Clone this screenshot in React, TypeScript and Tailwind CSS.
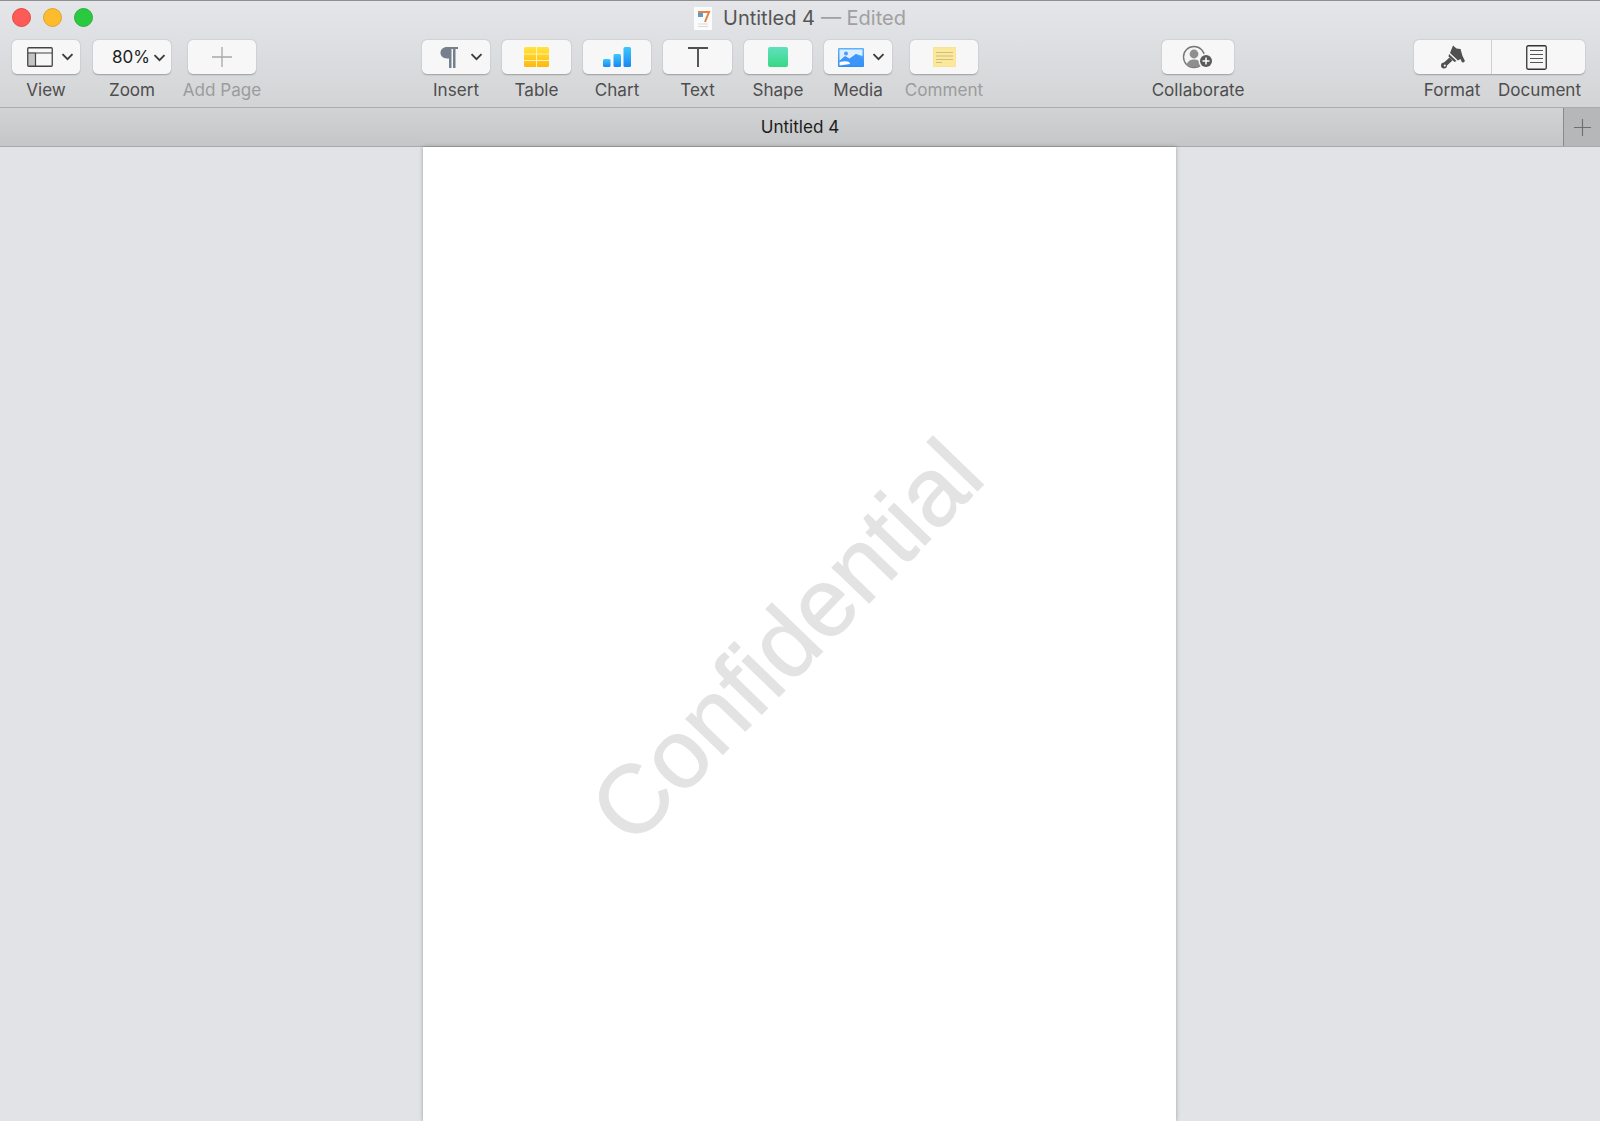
import React from 'react';

const Chevron = () => (
  <svg width="13" height="8" viewBox="0 0 13 8" fill="none" stroke="#3c3c3c" strokeWidth="1.9">
    <path d="M1.5 1.2 L6.5 6.2 L11.5 1.2" />
  </svg>
);

const ViewIcon = () => (
  <svg width="26" height="20" viewBox="0 0 26 20" fill="none">
    <rect x="1" y="5" width="8" height="14" fill="#c4c4c4" />
    <rect x="0.75" y="0.75" width="24.5" height="18.5" rx="1" stroke="#444" strokeWidth="1.3" />
    <path d="M1 6 H25 M8.5 6 V19" stroke="#444" strokeWidth="1.2" />
  </svg>
);

const PlusIcon = ({ color, size }: { color: string; size: number }) => (
  <svg width={size} height={size} viewBox="0 0 20 20" stroke={color} strokeWidth="1.3">
    <path d="M10 0 V20 M0 10 H20" />
  </svg>
);

const PilcrowIcon = () => (
  <svg width="18" height="21" viewBox="0 0 18 21" fill="#75808c">
    <path d="M7 0 H18 V2 H15.5 V21 H13 V2 H11.5 V21 H9 V11.5 H7 C3 11.5 0.5 9 0.5 5.8 C0.5 2.5 3 0 7 0 Z" />
  </svg>
);

const TableIcon = () => (
  <svg width="25" height="20" viewBox="0 0 25 20">
    <defs>
      <linearGradient id="tbl" x1="0" y1="0" x2="0" y2="1">
        <stop offset="0" stopColor="#ffe53d" />
        <stop offset="1" stopColor="#ffb80f" />
      </linearGradient>
    </defs>
    <rect width="25" height="20" rx="1.5" fill="url(#tbl)" />
    <path d="M0 7 H25 M0 13.5 H25 M12.5 0 V20" stroke="#fff3b8" strokeWidth="1" />
  </svg>
);

const ChartIcon = () => (
  <svg width="28" height="20" viewBox="0 0 28 20">
    <defs>
      <linearGradient id="bar" x1="0" y1="0" x2="0" y2="1">
        <stop offset="0" stopColor="#3cc8fb" />
        <stop offset="1" stopColor="#1a85f5" />
      </linearGradient>
    </defs>
    <rect x="0" y="12" width="7.5" height="8" rx="1.5" fill="url(#bar)" />
    <rect x="10.5" y="7" width="7.5" height="13" rx="1.5" fill="url(#bar)" />
    <rect x="20.5" y="0" width="7.5" height="20" rx="1.5" fill="url(#bar)" />
  </svg>
);

const TextIcon = () => (
  <svg width="20" height="20" viewBox="0 0 20 20" stroke="#505050" strokeWidth="1.9" fill="none">
    <path d="M0 1 H20 M10 1 V20" />
  </svg>
);

const MediaIcon = () => (
  <svg width="26" height="19" viewBox="0 0 26 19">
    <defs>
      <linearGradient id="sky" x1="0" y1="0" x2="0" y2="1">
        <stop offset="0" stopColor="#5fb3fd" />
        <stop offset="1" stopColor="#2f8bfa" />
      </linearGradient>
    </defs>
    <rect width="26" height="19" rx="1" fill="url(#sky)" />
    <path d="M1.5 1.5 H24.5 V8 L18 6 L11.5 10.5 L7 8 L1.5 13 Z" fill="#dcefff" />
    <circle cx="8" cy="5.5" r="2" fill="#4a9dfb" />
    <path d="M1.5 13 L7 8.5 L11.5 11.5 L18 6 L24.5 11 L24.5 17.5 L1.5 17.5 Z" fill="#3d94fb" />
    <path d="M1.5 17.5 L1.5 14 Q12 12 12 16 Z" fill="#fff" />
  </svg>
);

const CommentIcon = () => (
  <svg width="23" height="20" viewBox="0 0 23 20">
    <rect width="23" height="20" rx="1" fill="#fbe89a" stroke="#f2d98a" strokeWidth="0.5" />
    <path d="M3 5.5 H20 M3 9 H20 M3 12.5 H20 M3 15.5 H9" stroke="#cdbd84" strokeWidth="1" />
  </svg>
);

const CollaborateIcon = () => (
  <svg width="32" height="24" viewBox="0 0 32 24">
    <circle cx="12" cy="12" r="10.5" fill="#f5f5f5" stroke="#777" strokeWidth="1.4" />
    <circle cx="12" cy="9" r="4.4" fill="#8e8e8e" />
    <path d="M4.5 20 C6 15.5 9 14.5 12 14.5 C15 14.5 18 15.5 19.5 20 C15 23 9 23 4.5 20 Z" fill="#8e8e8e" />
    <circle cx="24" cy="16" r="7.5" fill="#f5f5f5" />
    <circle cx="24" cy="16" r="6" fill="#5a5a5a" />
    <path d="M24 12.5 V19.5 M20.5 16 H27.5" stroke="#fff" strokeWidth="1.5" />
  </svg>
);

const FormatIcon = () => (
  <svg width="24" height="24" viewBox="0 0 24 24" fill="#505050">
    <path d="M12 0.5 L15.5 3.5 L19.5 4 L21.5 11 L23.5 15 A1.6 1.6 0 1 1 20.5 16.5 L19.5 14 L17 15.5 L9 8 Z" />
    <path d="M8 9 L15.5 16 L13.5 17 L7.5 11.5 Z" />
    <path fillRule="evenodd" d="M8.5 12.5 L11.5 15.5 L6 20.5 A3 3 0 1 1 3 17.5 Z M3.8 19.4 A1 1 0 1 0 3.81 19.4 Z" />
  </svg>
);

const DocumentIcon = () => (
  <svg width="21" height="25" viewBox="0 0 21 25" fill="none" stroke="#333">
    <rect x="0.75" y="0.75" width="19.5" height="23.5" rx="1.5" strokeWidth="1.3" />
    <path d="M4 5.5 H17 M4 9.5 H17 M4 13.5 H17 M4 17.5 H17" strokeWidth="1.2" stroke="#555" />
  </svg>
);

const btn = 'h-[34px] flex items-center justify-center rounded-[5px] bg-[#f7f7f7] shadow-[0_0.5px_1.5px_rgba(0,0,0,0.28)]';

type ToolProps = {
  label: string;
  width: string;
  dim?: boolean;
  children: React.ReactNode;
};

const Tool = ({ label, width, dim, children }: ToolProps) => (
  <div className={`flex flex-col items-center ${width}`}>
    <div className={`${btn} w-full`}>{children}</div>
    <span className={`mt-[5px] text-[17.1px] leading-[22px] whitespace-nowrap ${dim ? 'text-[#9c9c9c]' : 'text-[#4d4d4d]'}`}>{label}</span>
  </div>
);

const App: React.FC = () => {
  return (
    <div className="relative flex h-[1121px] w-[1600px] flex-col overflow-hidden bg-[#e1e3e7] font-['Inter','Liberation_Sans',sans-serif]">
      <div className="relative h-[108px] shrink-0 border-t border-t-[#8f8f8f] border-b border-b-[#acacac] bg-gradient-to-b from-[#e5e6e9] to-[#d3d4d6]">
        <div className="flex h-[32px] items-center pl-[12px]">
          <div className="flex gap-[12px]">
            <span className="h-[19px] w-[19px] rounded-full bg-[#fc5b57] border border-[#e5483f]" />
            <span className="h-[19px] w-[19px] rounded-full bg-[#fdbb2e] border border-[#e0a52a]" />
            <span className="h-[19px] w-[19px] rounded-full bg-[#2ac940] border border-[#25b23a]" />
          </div>
          <div className="ml-[601px] mt-[2px] flex items-center">
            <svg width="18" height="23" viewBox="0 0 18 23">
              <rect width="18" height="23" fill="#fbfbfb" />
              <rect x="4" y="5" width="5" height="5" fill="#5b9bd5" />
              <path d="M4 5 H15 L11 15" fill="none" stroke="#e8813a" strokeWidth="2" />
              <path d="M4 17 H14 M4 19.5 H14" stroke="#d9d9d9" strokeWidth="1" />
            </svg>
            <span className="ml-[11px] text-[20px] leading-[26px] whitespace-nowrap text-[#555]">Untitled 4</span>
            <span className="ml-[6px] text-[20px] leading-[26px] whitespace-nowrap text-[#a0a0a0]">— Edited</span>
          </div>
        </div>
        <div className="mt-[7px] flex items-start pl-[12px]">
          <Tool label="View" width="w-[68px]">
            <span className="ml-[8px] flex items-center gap-[8px]"><ViewIcon /><Chevron /></span>
          </Tool>
          <div className="ml-[13px]">
            <Tool label="Zoom" width="w-[78px]">
              <span className="ml-[14px] mt-[2px] flex items-center gap-[3px] text-[17px] text-[#1e1e1e]">80%<Chevron /></span>
            </Tool>
          </div>
          <div className="ml-[17px]">
            <Tool label="Add Page" width="w-[68px]" dim>
              <PlusIcon color="#a8a8a8" size={20} />
            </Tool>
          </div>
          <div className="ml-[166px] flex gap-[12px]">
            <Tool label="Insert" width="w-[68px]">
              <span className="ml-[11px] flex items-center gap-[12px]"><PilcrowIcon /><Chevron /></span>
            </Tool>
            <Tool label="Table" width="w-[69px]"><TableIcon /></Tool>
            <Tool label="Chart" width="w-[68px]"><ChartIcon /></Tool>
            <Tool label="Text" width="w-[69px]"><TextIcon /></Tool>
            <Tool label="Shape" width="w-[68px]">
              <span className="h-[20px] w-[20px] rounded-[2px] bg-gradient-to-b from-[#5fe0bd] to-[#35d884]" />
            </Tool>
            <Tool label="Media" width="w-[68px]">
              <span className="ml-[7px] flex items-center gap-[8px]"><MediaIcon /><Chevron /></span>
            </Tool>
            <div className="ml-[6px]">
              <Tool label="Comment" width="w-[68px]" dim><CommentIcon /></Tool>
            </div>
          </div>
          <div className="ml-[184px]">
            <Tool label="Collaborate" width="w-[72px]"><CollaborateIcon /></Tool>
          </div>
          <div className="ml-[180px] flex">
            <div className="flex w-[78px] flex-col items-center">
              <div className={`${btn} w-full rounded-r-none border-r border-r-[#dcdcdc]`}><FormatIcon /></div>
              <span className="mt-[5px] mr-[2px] text-[17.1px] leading-[22px] text-[#4d4d4d]">Format</span>
            </div>
            <div className="flex w-[93px] flex-col items-center">
              <div className={`${btn} w-full rounded-l-none pr-[4px]`}><DocumentIcon /></div>
              <span className="mt-[5px] ml-[2px] text-[17.1px] leading-[22px] whitespace-nowrap text-[#4d4d4d]">Document</span>
            </div>
          </div>
        </div>
      </div>

      <div className="flex h-[39px] shrink-0 border-b border-b-[#a9a9a9] bg-gradient-to-b from-[#d2d3d5] to-[#c5c6c8]">
        <div className="flex flex-1 items-center justify-center pl-[37px] text-[17.1px] text-[#1c1c1c]">Untitled 4</div>
        <div className="flex w-[37px] items-center justify-center border-l-[1.5px] border-l-[#8a8a8a] bg-[#b6b7b9]">
          <PlusIcon color="#6e6e6e" size={17} />
        </div>
      </div>

      <div className="flex min-h-0 flex-1 justify-center">
        <div className="relative ml-[-1px] h-full w-[753px] bg-white shadow-[0_0_4px_rgba(0,0,0,0.3)]">
          <span className="absolute left-[363px] top-[494px] -translate-x-1/2 -translate-y-1/2 -rotate-[46deg] font-['Liberation_Sans',sans-serif] text-[97px] leading-none whitespace-nowrap text-[#e3e3e3] [-webkit-text-stroke:1px_#e3e3e3]">
            Confidential
          </span>
        </div>
      </div>
    </div>
  );
};

export default App;
